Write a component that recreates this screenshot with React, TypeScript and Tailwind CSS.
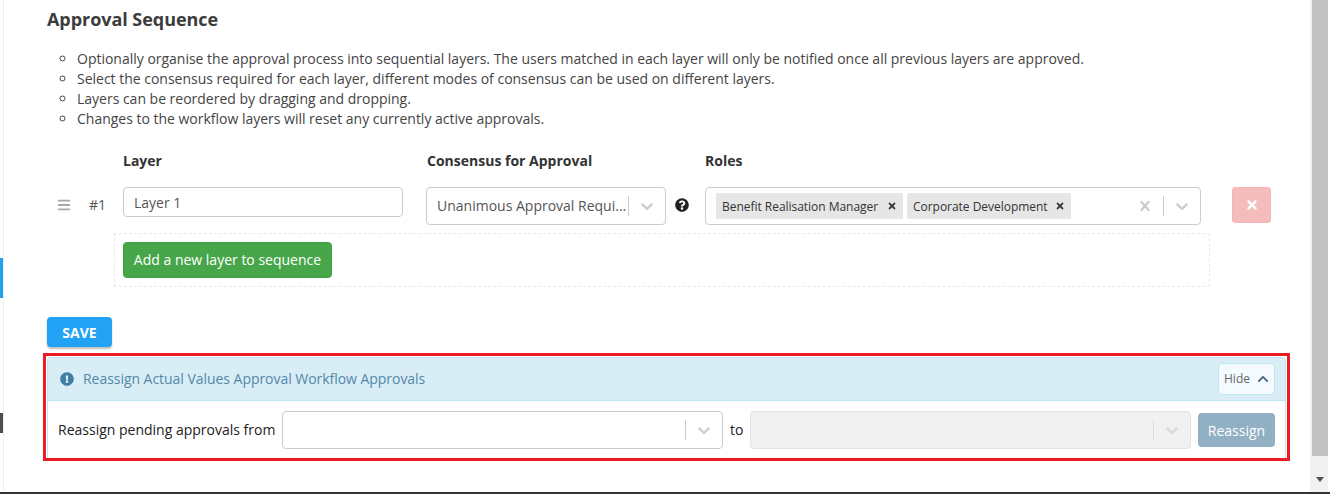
import React from "react";
import { FaBars, FaTimes, FaQuestionCircle, FaExclamationCircle, FaChevronUp } from "react-icons/fa";

const Chevron = ({ className = "" }: { className?: string }) => (
  <svg viewBox="0 0 20 20" width="20" height="20" fill="currentColor" className={className}>
    <path d="M4.516 7.548c0.436-0.446 1.043-0.481 1.576 0l3.908 3.747 3.908-3.747c0.533-0.481 1.141-0.446 1.574 0 0.436 0.445 0.408 1.197 0 1.615-0.406 0.418-4.695 4.502-4.695 4.502-0.217 0.223-0.502 0.335-0.787 0.335s-0.57-0.112-0.789-0.335c0 0-4.287-4.084-4.695-4.502s-0.436-1.17 0-1.615z" />
  </svg>
);

const Cross = ({ className = "" }: { className?: string }) => (
  <svg viewBox="0 0 20 20" width="20" height="20" fill="currentColor" className={className}>
    <path d="M14.348 14.849c-0.469 0.469-1.229 0.469-1.697 0l-2.651-3.030-2.651 3.029c-0.469 0.469-1.229 0.469-1.697 0-0.469-0.469-0.469-1.229 0-1.697l2.758-3.15-2.759-3.152c-0.469-0.469-0.469-1.228 0-1.697s1.228-0.469 1.697 0l2.652 3.031 2.651-3.031c0.469-0.469 1.228-0.469 1.697 0s0.469 1.229 0 1.697l-2.758 3.152 2.758 3.15c0.469 0.469 0.469 1.229 0 1.698z" />
  </svg>
);

const Tag = ({ label, w }: { label: string; w: string }) => (
  <div className={`flex h-[26px] items-center justify-between rounded-[2px] bg-[#e6e6e6] pl-[6px] pr-[6px] text-[12px] tracking-[-0.03px] text-[#333333] ${w}`}>
    <span className="pt-[2px]">{label}</span>
    <FaTimes className="h-[10px] w-[10px] text-[#333333]" />
  </div>
);

const SelectEnd = ({ muted = false }: { muted?: boolean }) => (
  <div className="flex items-center">
    <span className={`h-[20px] w-px ${muted ? "bg-[#dedede]" : "bg-[#cccccc]"}`} />
    <Chevron className={`mx-[8px] ${muted ? "text-[#d8d8d8]" : "text-[#cccccc]"}`} />
  </div>
);

export default function App() {
  return (
    <div
      className="flex h-[494px] w-[1330px] flex-col overflow-hidden bg-white text-[14px] text-[#333333]"
      style={{ fontFamily: '"Open Sans", sans-serif' }}
    >
      <div className="flex min-h-0 flex-1">
        <aside className="flex w-[4px] flex-col border-r border-[#eeeeee]">
          <div className="mt-[258px] h-[40px] w-[3px] bg-[#22a2f5]" />
          <div className="mt-[115px] h-[20px] w-[3px] bg-[#4a4f54]" />
        </aside>

        <main className="w-[1306px] pl-[43px] pt-[8px]">
          <h2 className="text-[18px] font-bold leading-[22px] tracking-[-0.05px] text-[#3c3c3c]">Approval Sequence</h2>

          <ul className="ml-[30px] mt-[19px] list-[circle] text-[14px] leading-[20px] tracking-[-0.01px] text-[#444444]">
            <li>Optionally organise the approval process into sequential layers. The users matched in each layer will only be notified once all previous layers are approved.</li>
            <li>Select the consensus required for each layer, different modes of consensus can be used on different layers.</li>
            <li>Layers can be reordered by dragging and dropping.</li>
            <li>Changes to the workflow layers will reset any currently active approvals.</li>
          </ul>

          <div className="ml-[76px] mt-[22px] flex h-[20px] items-center text-[14px] font-bold leading-[20px] text-[#333333]">
            <span className="w-[303px]">Layer</span>
            <span className="w-[279px] pl-px">Consensus for Approval</span>
            <span>Roles</span>
          </div>

          <div className="mt-[16px] flex h-[38px] items-start">
            <FaBars className="ml-[10px] mt-[11px] h-[14px] w-[14px] text-[#a8a8a8]" />
            <span className="ml-[18px] mt-[8px] w-[34px] text-[14px] leading-[20px] text-[#555555]">#1</span>
            <div className="flex h-[30px] w-[280px] items-center rounded-[4px] border border-[#cccccc] pl-[10px] text-[14px] text-[#555555]">
              Layer 1
            </div>
            <div className="ml-[23px] flex h-[38px] w-[240px] items-center justify-between rounded-[4px] border border-[#cccccc] pl-[10px] text-[14px] text-[#555555]">
              <span className="pb-[2px]">Unanimous Approval Requi...</span>
              <SelectEnd />
            </div>
            <FaQuestionCircle className="ml-[9px] mt-[11px] h-[14px] w-[14px] text-[#222222]" />
            <div className="ml-[16px] flex h-[38px] w-[496px] items-center justify-between rounded-[4px] border border-[#cccccc] pl-[10px]">
              <div className="flex items-center gap-[4px]">
                <Tag label="Benefit Realisation Manager" w="w-[187px]" />
                <Tag label="Corporate Development" w="w-[164px]" />
              </div>
              <div className="flex items-center">
                <Cross className="mr-[8px] text-[#cccccc]" />
                <SelectEnd />
              </div>
            </div>
            <button className="ml-[31px] flex h-[36px] w-[39px] items-center justify-center rounded-[3px] border border-[#f5b5b5] bg-[#f5bcbc] text-white">
              <FaTimes className="h-[14px] w-[14px]" />
            </button>
          </div>

          <div className="ml-[67px] mt-[8px] h-[54px] w-[1096px] border border-dashed border-[#e8e8e8] pl-[8px] pt-[8px]">
            <button className="h-[36px] w-[209px] rounded-[4px] border border-[#3f9e42] bg-[#46a649] text-[14px] leading-[20px] text-white">
              Add a new layer to sequence
            </button>
          </div>

          <button className="mt-[30px] block h-[30px] w-[65px] rounded-[4px] bg-[#22a2f5] text-[14px] font-bold text-white shadow-[0_2px_2px_rgba(0,0,0,0.25)]">
            SAVE
          </button>

          <section className="-ml-[4px] mt-[6px] h-[108px] w-[1247px] border-[3px] border-[#ed1c24] px-px pt-px">
            <div className="h-full overflow-hidden rounded-t-[4px] border border-b-0 border-[#bce8f1]">
              <div className="flex h-[43px] items-center justify-between border-b border-[#bce8f1] bg-[#d9edf7] pl-[12px] pr-[10px]">
                <div className="flex items-center text-[14px] tracking-[-0.04px] text-[#5288a8]">
                  <FaExclamationCircle className="mr-[9px] h-[14px] w-[14px] text-[#3f7fa3]" />
                  <span className="pb-[2px]">Reassign Actual Values Approval Workflow Approvals</span>
                </div>
                <button className="flex h-[32px] w-[57px] items-center justify-between rounded-[4px] border border-[#bce8f1] bg-[#f4fafe] pl-[5px] pr-[5px] text-[12px] text-[#666666]">
                  <span>Hide</span>
                  <FaChevronUp className="h-[12px] w-[12px] text-[#4f6d82]" />
                </button>
              </div>
              <div className="flex items-center pl-[10px] pr-[10px] pt-[10px]">
                <span className="w-[224px] pb-[2px] text-[14px] text-[#222222]">Reassign pending approvals from</span>
                <div className="flex h-[38px] w-[441px] items-center justify-end rounded-[4px] border border-[#cccccc] bg-white">
                  <SelectEnd />
                </div>
                <span className="ml-[7px] w-[20px] pb-[2px] text-[14px] text-[#222222]">to</span>
                <div className="flex h-[38px] w-[441px] items-center justify-end rounded-[4px] border border-[#e3e3e3] bg-[#f1f1f1]">
                  <SelectEnd muted />
                </div>
                <button className="ml-[7px] h-[34px] w-[77px] rounded-[4px] bg-[#92b0c4] text-[14px] text-white">
                  Reassign
                </button>
              </div>
            </div>
          </section>
        </main>

        <div className="flex w-[18px] flex-col bg-[#f1f1f1] pl-[2px]">
          <div className="h-[456px] w-[16px] bg-[#c1c1c1]" />
          <div className="mt-[21px] flex w-[16px] justify-center">
            <span className="h-0 w-0 border-x-[4px] border-t-[5px] border-x-transparent border-t-[#505050]" />
          </div>
        </div>
      </div>
      <div className="h-[2px] bg-[#333333]" />
    </div>
  );
}
